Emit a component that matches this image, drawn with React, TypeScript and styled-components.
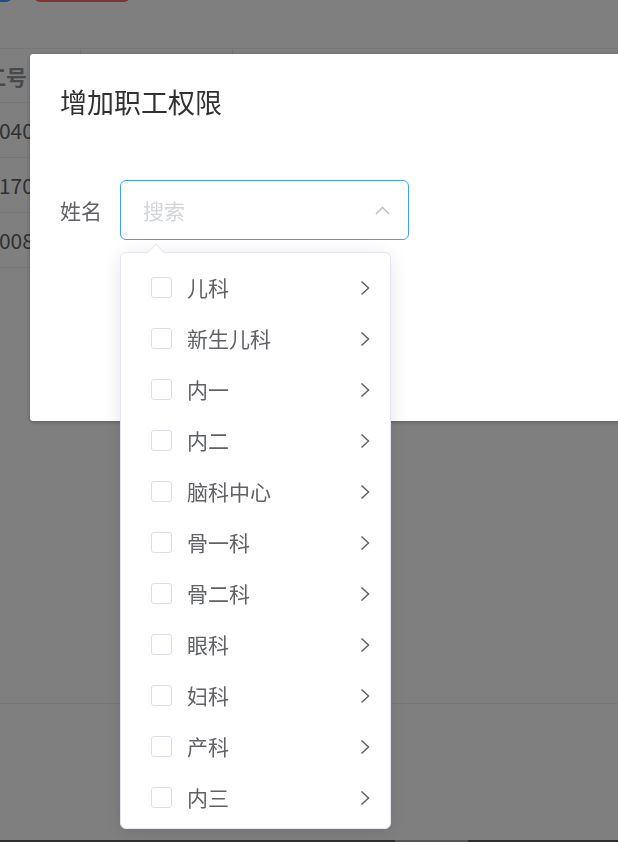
import React from 'react'
import styled, { createGlobalStyle } from 'styled-components'

const DEPTS = [
  '儿科',
  '新生儿科',
  '内一',
  '内二',
  '脑科中心',
  '骨一科',
  '骨二科',
  '眼科',
  '妇科',
  '产科',
  '内三',
]

const ROWS = ['1200401', '1201701', '1200081']

const ChevronUp = () => (
  <svg width="15" height="9" viewBox="0 0 15 9" fill="none">
    <polyline points="1,8 7.5,1.5 14,8" stroke="#c0c4cc" strokeWidth="1.6" />
  </svg>
)

const ChevronRight = () => (
  <svg width="10" height="16" viewBox="0 0 10 16" fill="none">
    <polyline points="1.5,1.5 8.5,8 1.5,14.5" stroke="#606266" strokeWidth="1.5" />
  </svg>
)

export default function App() {
  return (
    <>
      <GlobalStyle />
      <Page>
        <Toolbar>
          <Btn $color="#409eff" $width={52} />
          <Btn $color="#f56c6c" $width={96} />
        </Toolbar>
        <Table>
          <HeadRow>
            <Cell $width={132} $head>职工号</Cell>
            <Cell $width={152} />
            <Cell $width={420} />
          </HeadRow>
          {ROWS.map((id) => (
            <Row key={id}>
              <Cell $width={132}>{id}</Cell>
              <Cell $width={152} />
              <Cell $width={420} />
            </Row>
          ))}
        </Table>
      </Page>

      <Mask>
        <Dialog>
          <DialogHeader>
            <Title>增加职工权限</Title>
          </DialogHeader>
          <DialogBody>
            <FormItem>
              <Label>姓名</Label>
              <SelectWrap>
                <Select>
                  <Placeholder>搜索</Placeholder>
                  <ChevronUp />
                </Select>
                <Dropdown>
                  <Arrow />
                  {DEPTS.map((d) => (
                    <Option key={d}>
                      <Check />
                      <OptionText>{d}</OptionText>
                      <ChevronRight />
                    </Option>
                  ))}
                </Dropdown>
              </SelectWrap>
            </FormItem>
          </DialogBody>
          <DialogFooter />
        </Dialog>
      </Mask>

      <Scrollbar>
        <Thumb />
      </Scrollbar>
    </>
  )
}

const GlobalStyle = createGlobalStyle`
  html, body {
    margin: 0;
    padding: 0;
    width: 618px;
    height: 842px;
    overflow: hidden;
    background: #fff;
    font-family: "Noto Sans CJK SC", "Liberation Sans", sans-serif;
  }
  * { box-sizing: border-box; }
`

const Page = styled.div`
  margin-left: -51px;
  width: 760px;
`

const Toolbar = styled.div`
  display: flex;
  gap: 22px;
  margin-top: -58px;
  padding-left: 11px;
`

const Btn = styled.div<{ $color: string; $width: number }>`
  width: ${(p) => p.$width}px;
  height: 60px;
  border-radius: 6px;
  background: ${(p) => p.$color};
`

const Table = styled.div`
  margin-top: 46px;
  height: 656px;
  border-top: 1px solid #ebeef5;
  border-bottom: 1px solid #ebeef5;
`

const HeadRow = styled.div`
  display: flex;
  height: 54px;
  border-bottom: 1px solid #ebeef5;
`

const Row = styled(HeadRow)`
  height: 55px;
`

const Cell = styled.div<{ $width: number; $head?: boolean }>`
  width: ${(p) => p.$width}px;
  flex: none;
  padding-left: 15px;
  display: flex;
  align-items: center;
  border-right: 1px solid #ebeef5;
  font-size: 21px;
  white-space: nowrap;
  overflow: hidden;
  color: ${(p) => (p.$head ? '#909399' : '#606266')};
  font-weight: ${(p) => (p.$head ? 700 : 400)};
`

const Mask = styled.div`
  position: fixed;
  inset: 0;
  background: rgba(0, 0, 0, 0.5);
  overflow: hidden;
  padding-top: 54px;
  padding-left: 30px;
`

const Dialog = styled.div`
  width: 900px;
  background: #fff;
  border-radius: 3px;
  box-shadow: 0 1px 4px rgba(0, 0, 0, 0.3);
`

const DialogHeader = styled.div`
  padding: 30px 30px 15px;
`

const Title = styled.div`
  font-size: 27px;
  line-height: 36px;
  color: #303133;
`

const DialogBody = styled.div`
  padding: 45px 30px 45px;
`

const DialogFooter = styled.div`
  height: 103px;
`

const FormItem = styled.div`
  display: flex;
  align-items: center;
  margin-bottom: 33px;
`

const Label = styled.div`
  width: 60px;
  padding-right: 18px;
  text-align: right;
  font-size: 21px;
  color: #606266;
`

const SelectWrap = styled.div`
  position: relative;
  width: 289px;
`

const Select = styled.div`
  height: 60px;
  border: 1px solid #409eff;
  border-radius: 6px;
  padding: 0 18px 0 22px;
  display: flex;
  align-items: center;
  justify-content: space-between;
`

const Placeholder = styled.span`
  font-size: 21px;
  color: #d3d5da;
`

const Dropdown = styled.div`
  position: absolute;
  top: 72px;
  left: 0;
  width: 271px;
  padding: 9px 0 5px;
  background: #fff;
  border: 1px solid #e4e7ed;
  border-radius: 6px;
  box-shadow: 0 3px 18px rgba(0, 0, 0, 0.1);
  z-index: 2;
`

const Arrow = styled.div`
  position: absolute;
  top: -7px;
  left: 29px;
  width: 12px;
  height: 12px;
  background: #fff;
  border-left: 1px solid #e4e7ed;
  border-top: 1px solid #e4e7ed;
  transform: rotate(45deg);
`

const Option = styled.div`
  height: 51px;
  padding: 0 20px 0 30px;
  display: flex;
  align-items: center;
`

const Check = styled.span`
  width: 21px;
  height: 21px;
  border: 1px solid #dcdfe6;
  border-radius: 3px;
  background: #fff;
  flex: none;
`

const OptionText = styled.span`
  flex: 1;
  margin-left: 15px;
  font-size: 21px;
  line-height: 21px;
  color: #606266;
`

const Scrollbar = styled.div`
  position: fixed;
  left: 0;
  right: 0;
  bottom: 0;
  height: 2px;
  background: #2e2e2e;
`

const Thumb = styled.div`
  width: 73px;
  height: 2px;
  margin-left: 395px;
  background: #555;
`
